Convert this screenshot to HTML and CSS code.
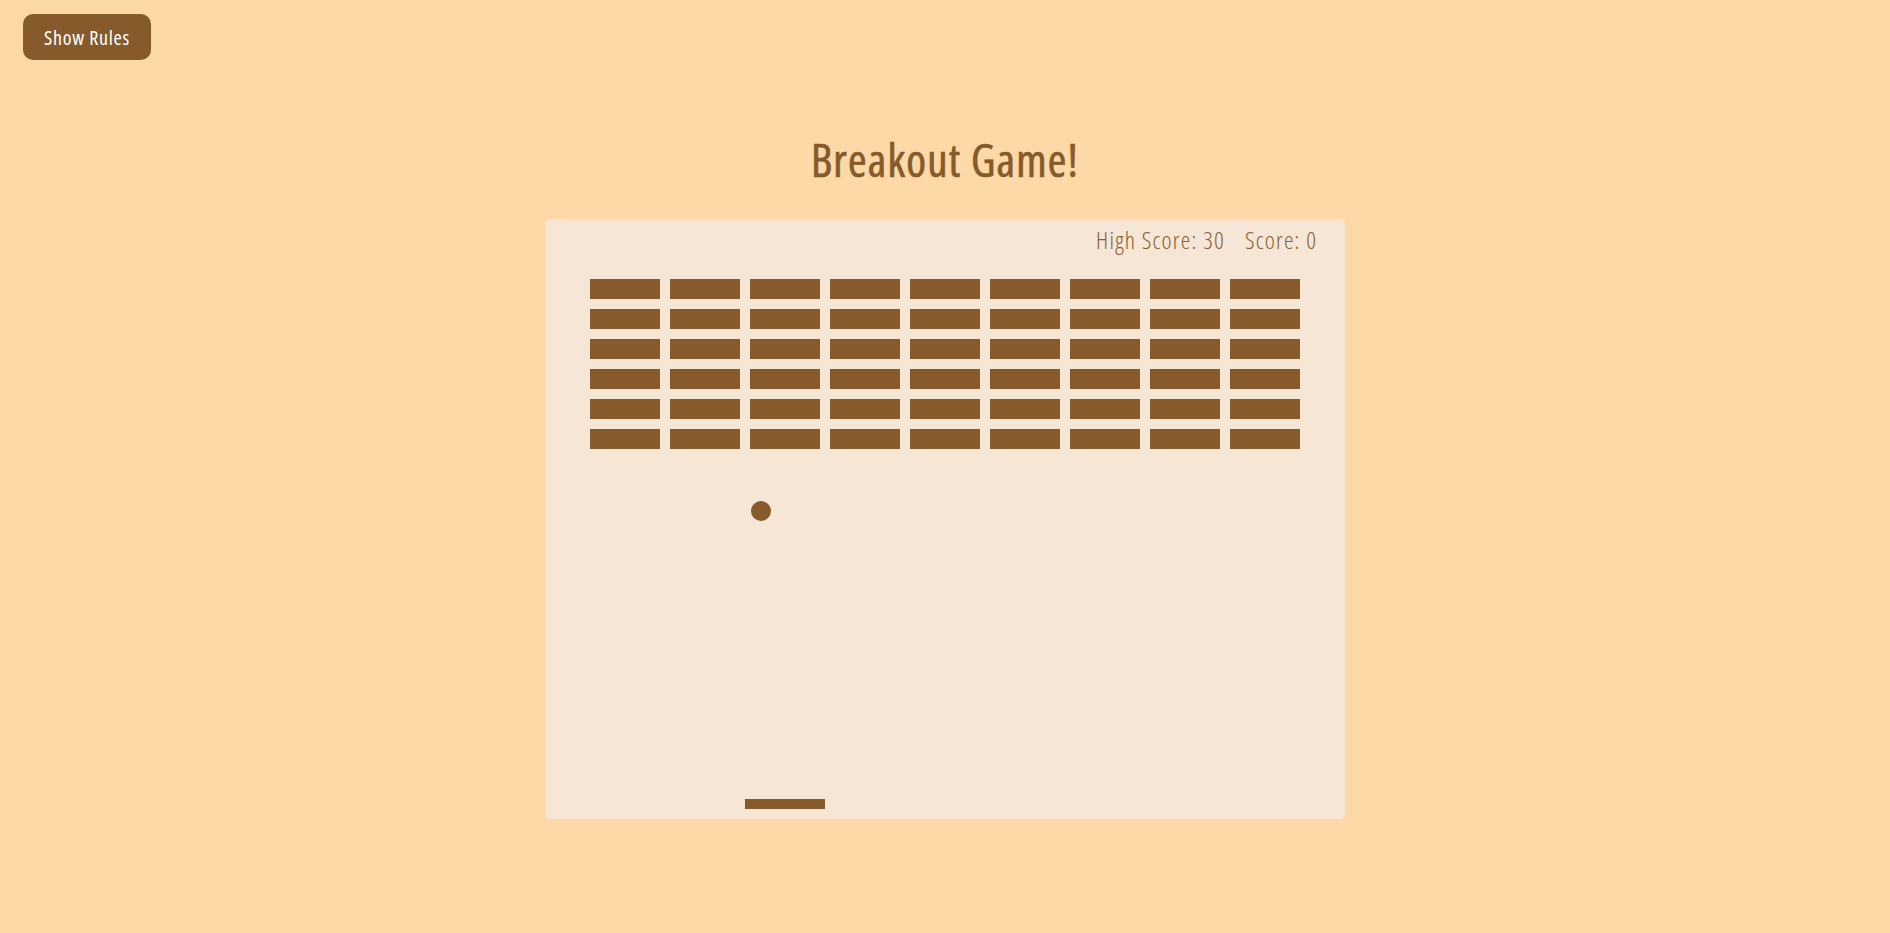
FILE: index.html
```html
<!DOCTYPE html>
<html lang="en">
<head>
<meta charset="UTF-8">
<title>Breakout Game</title>
<link rel="stylesheet" href="styles.css">
</head>
<body>
  <header class="topbar">
    <button class="rules-btn" type="button">Show Rules</button>
  </header>

  <main class="game">
    <h1 class="title">Breakout Game!</h1>

    <div class="board">
      <div class="scores">
        <span class="high-score">High Score: 30</span>
        <span class="score">Score: 0</span>
      </div>

      <div class="bricks">
        <i></i><i></i><i></i><i></i><i></i><i></i><i></i><i></i><i></i>
        <i></i><i></i><i></i><i></i><i></i><i></i><i></i><i></i><i></i>
        <i></i><i></i><i></i><i></i><i></i><i></i><i></i><i></i><i></i>
        <i></i><i></i><i></i><i></i><i></i><i></i><i></i><i></i><i></i>
        <i></i><i></i><i></i><i></i><i></i><i></i><i></i><i></i><i></i>
        <i></i><i></i><i></i><i></i><i></i><i></i><i></i><i></i><i></i>
      </div>

      <div class="ball"></div>
      <div class="paddle"></div>
    </div>
  </main>
</body>
</html>
```

FILE: styles.css
```css
* {
  box-sizing: border-box;
}

body {
  margin: 0;
  min-height: 100vh;
  background: #ffd8a8;
  color: #875a2b;
  font-family: "Open Sans", "DejaVu Sans", sans-serif;
  font-stretch: 75%;
}

.topbar {
  padding: 14px 0 0 23px;
}

.rules-btn {
  display: flex;
  align-items: center;
  justify-content: center;
  width: 128px;
  height: 46px;
  padding: 0;
  border: none;
  border-radius: 10px;
  background: #875a2b;
  color: #ffffff;
  font-family: inherit;
  font-stretch: 75%;
  font-size: 20px;
  letter-spacing: 0.7px;
  cursor: pointer;
}

.game {
  display: flex;
  flex-direction: column;
  align-items: center;
}

.title {
  margin: 74px 0 33px;
  font-size: 45px;
  line-height: 52px;
  font-weight: 500;
  letter-spacing: 1.2px;
  -webkit-text-stroke: 0.7px currentColor;
}

/* playfield */
.board {
  position: relative;
  width: 800px;
  height: 600px;
  border-radius: 5px;
  background: #f6e6d6;
}

.scores {
  display: flex;
  justify-content: flex-end;
  padding-top: 7px;
  font-size: 24px;
  line-height: 28px;
  font-weight: 300;
  letter-spacing: 1.2px;
  color: #8a6036;
}

.high-score {
  margin-right: 20px;
}

.score {
  width: 100px;
}

.bricks {
  display: grid;
  grid-template-columns: repeat(9, 70px);
  grid-auto-rows: 20px;
  gap: 10px;
  margin-top: 25px;
  padding-left: 45px;
}

.bricks i {
  display: block;
  background: #875a2b;
}

.ball {
  position: absolute;
  left: 206px;
  top: 282px;
  width: 20px;
  height: 20px;
  border-radius: 50%;
  background: #875a2b;
}

.paddle {
  position: absolute;
  left: 200px;
  top: 580px;
  width: 80px;
  height: 10px;
  background: #875a2b;
}
```
